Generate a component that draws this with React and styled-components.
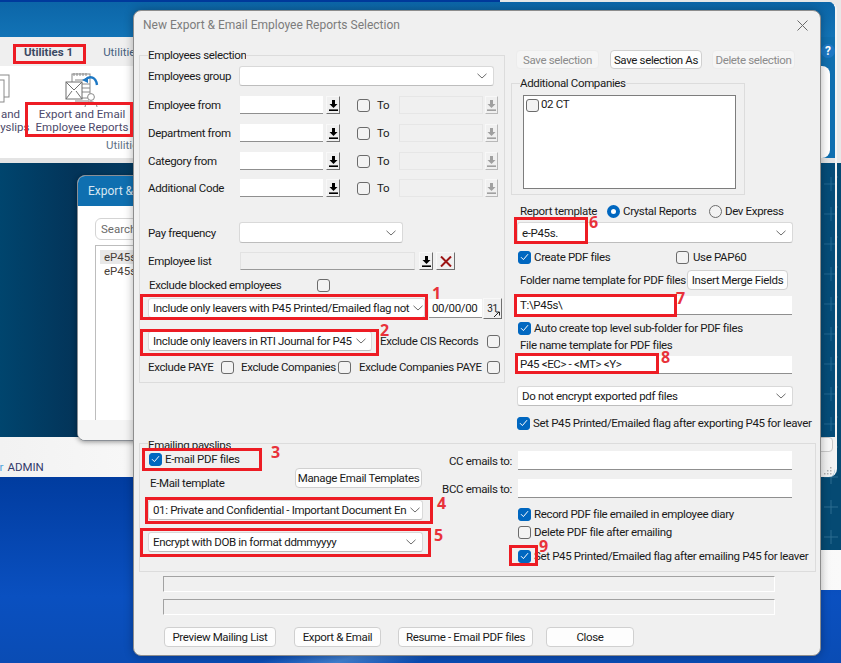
import React from "react";
import styled, { createGlobalStyle } from "styled-components";

const GlobalStyle = createGlobalStyle`
  html, body { margin: 0; padding: 0; background: #0a45ad; }
  * { box-sizing: border-box; }
`;

const Desktop = styled.div`
  position: relative;
  width: 841px;
  height: 663px;
  overflow: hidden;
  font-family: Roboto, "Noto Sans", sans-serif;
  font-size: 11.5px;
  letter-spacing: -0.35px;
  color: #1a1a1a;
  background:
    linear-gradient(160deg, transparent 78%, rgba(120, 180, 235, 0.5) 81%, transparent 84%),
    linear-gradient(180deg, #003a9c 70%, #0a50c0 90%, #0a4cb4 100%);
`;

/* windows sitting behind the dialog */
const BackWindow = styled.div`
  position: absolute;
  left: 500px;
  top: 0;
  right: 0;
  height: 590px;
  display: flex;
  flex-direction: column;
  background: #f4f4f4;
`;
const BackRibbon = styled.div`
  height: 163px;
  background: #e8e8e8;
`;
const BackStatus = styled.div`
  height: 40px;
  background: linear-gradient(90deg, #ededed, #fafafa);
`;
const TealBody = styled.div`
  flex: 1;
  position: relative;
  overflow: hidden;
  background: ${(p) => p.$bg};
`;
const CrossSvg = styled.svg`
  position: absolute;
  inset: 0;
  width: 100%;
  height: 100%;
`;

const AppWindow = styled.div`
  position: absolute;
  left: 0;
  top: 2px;
  width: 837px;
  height: 475px;
  display: flex;
  flex-direction: column;
  background: #0f6fb0;
  border-right: 2px solid #f4f4f4;
  border-radius: 0 8px 8px 0;
  overflow: hidden;
  letter-spacing: 0;
  font-size: 11.5px;
`;
const AppHeader = styled.div`
  height: 35px;
  background: linear-gradient(180deg, #0c66a8, #1273b6);
`;
const TabRow = styled.div`
  height: 29px;
  display: flex;
`;
const TabStrip = styled.div`
  flex: 1;
  display: flex;
  align-items: center;
  padding-left: 24px;
  gap: 30px;
  background: #efefef;
`;
const Tab = styled.span`
  font-weight: ${(p) => (p.$active ? 700 : 400)};
  color: ${(p) => (p.$active ? "#3b4a63" : "#47617f")};
`;
const HelpZone = styled.div`
  width: 17px;
  padding-left: 3px;
  display: flex;
  align-items: center;
`;
const HelpIcon = styled.span`
  flex: none;
  width: 14px;
  height: 14px;
  margin-top: -2px;
  border-radius: 50%;
  background: #1d78c4;
  color: #fff;
  font-size: 12px;
  font-weight: 700;
  line-height: 14px;
  text-align: center;
`;
const RibbonBand = styled.div`
  height: 92px;
  margin-right: 5px;
  display: flex;
  flex-direction: column;
  background: #fff;
  border-radius: 0 8px 8px 0;
`;
const ToolRow = styled.div`
  display: flex;
  height: 70px;
  padding-top: 6px;
`;
const Tool = styled.div`
  flex: none;
  width: ${(p) => p.$w}px;
  margin-left: ${(p) => p.$ml}px;
  display: flex;
  flex-direction: column;
  align-items: center;
  color: #4d4a6a;
  line-height: 13px;
  text-align: center;
  white-space: nowrap;
  svg { flex: none; }
`;
const RibbonCaption = styled.div`
  padding-left: 106px;
  margin-top: 2px;
  color: #5f7288;
`;
const RibbonGap = styled.div`
  height: 5px;
  background: #e4e4e4;
`;
const AppStatus = styled.div`
  position: relative;
  height: 40px;
  display: flex;
  align-items: flex-end;
  gap: 4px;
  padding: 0 0 3px 0;
  background: linear-gradient(90deg, #f2f2f2, #fff 40%, #f2f2f2);
  color: #333a6a;
`;
const StatusKey = styled.span`
  margin-left: -20px;
  color: #4ea3dc;
`;
const StatusPanel = styled.div`
  position: absolute;
  right: 2px;
  top: 0;
  width: 20px;
  height: 15px;
  background: #f7f7f7;
  border: 1px solid #c9c9c9;
  border-radius: 4px;
`;
const ResizeGrip = styled.svg`
  position: absolute;
  right: 3px;
  bottom: 2px;
  width: 9px;
  height: 9px;
`;

const ExportWindow = styled.div`
  position: absolute;
  left: 77px;
  top: 175px;
  width: 700px;
  height: 266px;
  display: flex;
  flex-direction: column;
  background: #fff;
  border: 1px solid #8a8f96;
  border-radius: 8px;
  overflow: hidden;
  box-shadow: 0 1px 5px rgba(0, 0, 0, 0.4);
  letter-spacing: 0;
`;
const ExportTitle = styled.div`
  height: 30px;
  flex: none;
  display: flex;
  align-items: center;
  padding-left: 10px;
  background: #0f6fb0;
  color: #d6e6f2;
  font-size: 12px;
`;
const ExportBody = styled.div`
  flex: 1;
  padding: 12px 0 0 17px;
`;
const SearchBox = styled.div`
  width: 200px;
  height: 22px;
  padding-left: 5px;
  line-height: 20px;
  border: 1px solid #d4d4d4;
  border-radius: 6px;
  color: #6a6a6a;
`;
const ReportList = styled.div`
  width: 300px;
  height: 175px;
  margin-top: 5px;
  padding: 4px 4px;
  border: 1px solid #bdbdbd;
  border-bottom: none;
`;
const ReportItem = styled.div`
  height: 14px;
  line-height: 14px;
  padding-left: 4px;
  background: ${(p) => (p.$sel ? "#e8e8e8" : "transparent")};
  color: #4a4038;
`;
const ExportFooter = styled.div`
  height: 21px;
  flex: none;
  background: #f5f5f5;
`;

/* main dialog */
const Dialog = styled.div`
  position: absolute;
  left: 133px;
  top: 10px;
  width: 688px;
  height: 646px;
  background: #f0f0f0;
  border: 1px solid #8d8d8d;
  border-radius: 8px;
  box-shadow: 0 0 10px rgba(0, 0, 0, 0.3);
`;
const TitleBar = styled.div`
  height: 29px;
  padding: 0 9px 1px;
  display: flex;
  align-items: center;
  justify-content: space-between;
  color: #7c7c7c;
  font-size: 12px;
  letter-spacing: 0;
`;
const CloseIcon = styled.svg`
  width: 11px;
  height: 11px;
  margin-right: 3px;
`;
const DialogBody = styled.div`
  padding: 8px 4px 0 5px;
`;
const TopGrid = styled.div`
  display: grid;
  grid-template-columns: 366px 304px;
  column-gap: 6px;
  align-items: start;
`;
const Column = styled.div`
  display: flex;
  flex-direction: column;
  min-width: 0;
`;
const Group = styled.fieldset`
  margin: ${(p) => p.$mt || 0}px 0 0;
  min-width: 0;
  width: ${(p) => (p.$w ? `${p.$w}px` : "auto")};
  padding: ${(p) => p.$pad};
  border: 1px solid #dcdcdc;
`;
const Legend = styled.legend`
  padding: 0;
  height: ${(p) => p.$h || 14}px;
  line-height: 14px;
  overflow: hidden;
`;
const Row = styled.div`
  display: flex;
  align-items: center;
  flex: none;
  height: ${(p) => p.$h || 16}px;
  margin-top: ${(p) => p.$mt || 0}px;
  margin-left: ${(p) => p.$ml || 0}px;
`;
const Label = styled.span`
  flex: none;
  white-space: nowrap;
  width: ${(p) => (p.$w ? `${p.$w}px` : "auto")};
  margin-left: ${(p) => p.$ml || 0}px;
  text-align: ${(p) => p.$align || "left"};
`;
const SelectBox = styled.div`
  flex: none;
  width: ${(p) => p.$w}px;
  height: ${(p) => p.$h || 20}px;
  padding: 0 6px 0 ${(p) => p.$pl || 4}px;
  display: flex;
  align-items: center;
  justify-content: space-between;
  background: #fff;
  border: 1px solid #d9d9d9;
  border-bottom-color: #bdbdbd;
  border-radius: 3px;
  white-space: nowrap;
  overflow: hidden;
`;
const Chevron = styled.svg`
  flex: none;
  width: 10px;
  height: 6px;
  margin-left: 4px;
`;
const TextBox = styled.div`
  flex: none;
  width: ${(p) => p.$w}px;
  height: ${(p) => p.$h || 18}px;
  margin-left: ${(p) => p.$ml || 0}px;
  padding-left: 3px;
  line-height: ${(p) => (p.$h || 18) - 1}px;
  background: ${(p) => (p.$off ? "#f0f0f0" : "#fff")};
  border: ${(p) => (p.$off ? "1px solid #e6e6e6" : "none")};
  border-bottom: 1px solid ${(p) => (p.$off ? "#e6e6e6" : "#8f8f8f")};
  white-space: nowrap;
`;
const ListBox = styled(TextBox)`
  background: #f0f0f0;
  border: 1px solid #e2e2e2;
  border-bottom: 1px solid #9a9a9a;
`;
const BevelButton = styled.div`
  flex: none;
  position: relative;
  width: ${(p) => p.$w}px;
  height: ${(p) => p.$h || 18}px;
  margin-left: ${(p) => p.$ml || 0}px;
  display: flex;
  align-items: center;
  justify-content: center;
  background: #f0f0f0;
  border: 1px solid;
  border-color: #f8f8f8 ${(p) => (p.$off ? "#b8b8b8" : "#6f6f6f")} ${(p) => (p.$off ? "#b8b8b8" : "#6f6f6f")} #f8f8f8;
  font-size: 10px;
`;
const CalendarCorner = styled.svg`
  position: absolute;
  right: 1px;
  bottom: 1px;
  width: 6px;
  height: 6px;
`;
const CheckBox = styled.span`
  flex: none;
  width: 13px;
  height: 13px;
  margin-left: ${(p) => p.$ml || 0}px;
  margin-right: ${(p) => p.$mr || 0}px;
  display: flex;
  align-items: center;
  justify-content: center;
  background: ${(p) => (p.$on ? "#0067c0" : "#f3f3f3")};
  border: 1px solid ${(p) => (p.$on ? "#0067c0" : "#6b6b6b")};
  border-radius: 3px;
`;
const Radio = styled.span`
  flex: none;
  width: 13px;
  height: 13px;
  margin-left: ${(p) => p.$ml || 0}px;
  margin-right: 3px;
  border-radius: 50%;
  background: ${(p) => (p.$on ? "#fff" : "#f3f3f3")};
  border: ${(p) => (p.$on ? "4px solid #0067c0" : "1px solid #6b6b6b")};
`;
const Button = styled.div`
  flex: none;
  width: ${(p) => p.$w}px;
  height: ${(p) => p.$h || 20}px;
  margin-left: ${(p) => p.$ml || 0}px;
  display: flex;
  align-items: center;
  justify-content: center;
  white-space: nowrap;
  background: ${(p) => (p.$off ? "#f5f5f5" : "#fdfdfd")};
  color: ${(p) => (p.$off ? "#8b8b8b" : "#1a1a1a")};
  border: 1px solid ${(p) => (p.$off ? "#ececec" : "#d0d0d0")};
  border-radius: 4px;
`;
const CompanyList = styled.div`
  width: 213px;
  height: 94px;
  margin-left: 3px;
  padding: 3px 2px;
  display: flex;
  align-items: flex-start;
  gap: 2px;
  line-height: 11px;
  background: #fff;
  border: 1px solid #7d7d7d;
`;
const EmailGrid = styled.div`
  display: grid;
  grid-template-columns: 284px 1fr;
`;
const TemplateLabel = styled.span`
  flex: none;
  width: 147px;
  padding-left: 2px;
  align-self: flex-start;
  margin-top: 7px;
  line-height: 16px;
`;
const Progress = styled.div`
  width: 612px;
  height: 16px;
  margin-left: 24px;
  margin-top: ${(p) => p.$mt}px;
  background: #f0f0f0;
  border: 1px solid;
  border-color: #a2a2a2 #fff #fff #a2a2a2;
`;
const FooterRow = styled.div`
  display: flex;
  margin: 12px 0 0 25px;
`;

/* red markup drawn over the screenshot */
const Frame = styled.div`
  position: absolute;
  left: ${(p) => p.$x}px;
  top: ${(p) => p.$y}px;
  width: ${(p) => p.$w}px;
  height: ${(p) => p.$h}px;
  border: 3px solid #ed1c24;
`;
const Mark = styled.span`
  position: absolute;
  left: ${(p) => p.$x}px;
  top: ${(p) => p.$y}px;
  font-family: "Open Sans", sans-serif;
  font-size: 16px;
  font-weight: 700;
  line-height: 12px;
  letter-spacing: 0;
  color: #e8323a;
`;

const FRAMES = [
  [13, 44, 73, 20],
  [25, 102, 108, 35],
  [140, 294, 288, 26],
  [140, 329, 239, 27],
  [142, 448, 120, 23],
  [145, 497, 288, 27],
  [140, 528, 291, 29],
  [514, 217, 74, 27],
  [514, 294, 163, 23],
  [515, 353, 144, 21],
  [509, 545, 29, 21],
];
const MARKS = [
  ["1", 432, 287],
  ["2", 380, 324],
  ["3", 271, 446],
  ["4", 437, 497],
  ["5", 434, 529],
  ["6", 589, 216],
  ["7", 676, 292],
  ["8", 661, 351],
  ["9", 539, 540],
];

const ChevronDown = () => (
  <Chevron viewBox="0 0 10 6">
    <path d="M.5.8 5 5 9.5.8" fill="none" stroke="#5c5c5c" strokeWidth="0.9" />
  </Chevron>
);

const Select = ({ w, h, pl, children }) => (
  <SelectBox $w={w} $h={h} $pl={pl}>
    <span>{children}</span>
    <ChevronDown />
  </SelectBox>
);

const Check = ({ on, ml, mr }) => (
  <CheckBox $on={on} $ml={ml} $mr={mr}>
    {on && (
      <svg width="9" height="8" viewBox="0 0 9 8">
        <path d="M1 4.2 3.4 6.6 8 1.2" fill="none" stroke="#fff" strokeWidth="1" />
      </svg>
    )}
  </CheckBox>
);

const PickIcon = ({ off }) => (
  <svg width="9" height="11" viewBox="0 0 9 11">
    <path d="M3 0h3v4h2.5L4.5 8 .5 4H3z" fill={off ? "#a0a0a0" : "#000"} />
    <rect y="9.4" width="9" height="1.6" fill={off ? "#a0a0a0" : "#000"} />
  </svg>
);

const FromRow = ({ label, mt }) => (
  <Row $h={18} $mt={mt}>
    <Label $w={92}>{label}</Label>
    <TextBox $w={83} />
    <BevelButton $w={14} $ml={3}>
      <PickIcon />
    </BevelButton>
    <Check ml={17} />
    <Label $w={22} $ml={7}>To</Label>
    <TextBox $w={84} $off />
    <BevelButton $w={13} $ml={2} $off>
      <PickIcon off />
    </BevelButton>
  </Row>
);

// only the strip right of the dialog shows the crosses
const Crosses = ({ id, color, x, y, from }) => (
  <CrossSvg>
    <defs>
      <pattern id={id} x={x} y={y} width="30" height="30" patternUnits="userSpaceOnUse">
        <path d="M15 8v14M8 15h14" stroke={color} strokeWidth="1" />
      </pattern>
    </defs>
    <rect x={from} width="100%" height="100%" fill={`url(#${id})`} />
  </CrossSvg>
);

const ExportIcon = () => (
  <svg width="34" height="36" viewBox="0 0 34 36">
    <rect x="7" y="2" width="18" height="24" fill="#fff" stroke="#8a8a8a" />
    <path d="M9 1v3M12 1v3M15 1v3M18 1v3M21 1v3M10 8h12M16 12h9M16 16h9M16 20h9M10 29h14" stroke="#8a8a8a" />
    <rect x="1" y="10" width="16" height="17" fill="#fff" stroke="#6f6f6f" />
    <path d="M1 10l8 8 8-8M1 27l6-8M17 27l-6-8" fill="none" stroke="#6f6f6f" />
    <path d="M20 8c5-5 11-3 12 5" fill="none" stroke="#1d78c4" strokeWidth="2.4" />
    <path d="M17 8l6-3v6z" fill="#1d78c4" />
    <circle cx="26" cy="25" r="3.4" fill="#fff" stroke="#8a8a8a" />
    <path d="M20 35c0-7 12-7 12 0" fill="#fff" stroke="#8a8a8a" />
  </svg>
);

const PayslipIcon = () => (
  <svg width="34" height="36" viewBox="0 0 34 36">
    <rect x="11" y="3" width="22" height="22" fill="#fff" stroke="#8a8a8a" />
    <rect x="6" y="8" width="22" height="22" fill="#fff" stroke="#8a8a8a" />
    <rect x="0" y="14" width="22" height="18" fill="#fff" stroke="#6f6f6f" />
    <path d="M0 14l11 9 11-9M0 32l8-11M22 32l-8-11" fill="none" stroke="#6f6f6f" />
  </svg>
);

export default function App() {
  return (
    <Desktop>
      <GlobalStyle />

      <BackWindow>
        <BackRibbon />
        <TealBody $bg="#054a73">
          <Crosses id="crossBack" color="#2c6b90" x="316" y="-1" from="320" />
        </TealBody>
        <BackStatus />
      </BackWindow>

      <AppWindow>
        <AppHeader />
        <TabRow>
          <TabStrip>
            <Tab $active>Utilities 1</Tab>
            <Tab>Utilities 2</Tab>
          </TabStrip>
          <HelpZone>
            <HelpIcon>?</HelpIcon>
          </HelpZone>
        </TabRow>
        <RibbonBand>
          <ToolRow>
            <Tool $w={75} $ml={-45}>
              <PayslipIcon />
              Export and
              <br />
              Email Payslips
            </Tool>
            <Tool $w={100} $ml={2}>
              <ExportIcon />
              Export and Email
              <br />
              Employee Reports
            </Tool>
          </ToolRow>
          <RibbonCaption>Utilities 1</RibbonCaption>
        </RibbonBand>
        <RibbonGap />
        <TealBody $bg="linear-gradient(90deg, #00456e 0, #033459 9%, #04456e 30%, #054c78 100%)">
          <Crosses id="crossApp" color="#1f6690" x="816" y="6" from="820" />
        </TealBody>
        <AppStatus>
          <StatusKey>User</StatusKey>
          ADMIN
          <StatusPanel />
          <ResizeGrip viewBox="0 0 9 9">
            <path d="M7 1h1.5v1.5H7zM4 4h1.5v1.5H4zM7 4h1.5v1.5H7zM1 7h1.5v1.5H1zM4 7h1.5v1.5H4zM7 7h1.5v1.5H7z" fill="#b0b0b0" />
          </ResizeGrip>
        </AppStatus>
      </AppWindow>

      <ExportWindow>
        <ExportTitle>Export &amp; Email Employee Reports</ExportTitle>
        <ExportBody>
          <SearchBox>Search</SearchBox>
          <ReportList>
            <ReportItem $sel>eP45s</ReportItem>
            <ReportItem>eP45s</ReportItem>
          </ReportList>
        </ExportBody>
        <ExportFooter />
      </ExportWindow>

      <Dialog>
        <TitleBar>
          <span>New Export &amp; Email Employee Reports Selection</span>
          <CloseIcon viewBox="0 0 11 11">
            <path d="M.5.5l10 10M10.5.5l-10 10" stroke="#6a6a6a" strokeWidth="1" />
          </CloseIcon>
        </TitleBar>
        <DialogBody>
          <TopGrid>
            <Column>
              <Group $pad="4px 4px 7px 8px">
                <Legend>Employees selection</Legend>
                <Row $h={20}>
                  <Label $w={91}>Employees group</Label>
                  <Select w={255} />
                </Row>
                <FromRow label="Employee from" mt={10} />
                <FromRow label="Department from" mt={10} />
                <FromRow label="Category from" mt={10} />
                <FromRow label="Additional Code" mt={9} />
                <Row $h={21} $mt={25}>
                  <Label $w={91}>Pay frequency</Label>
                  <Select w={164} h={21} />
                </Row>
                <Row $h={18} $mt={9}>
                  <Label $w={92}>Employee list</Label>
                  <ListBox $w={175} />
                  <BevelButton $w={14} $ml={4}>
                    <PickIcon />
                  </BevelButton>
                  <BevelButton $w={19} $ml={3}>
                    <svg width="12" height="11" viewBox="0 0 12 11">
                      <path d="M1 .5l10 10M11 .5L1 10.5" stroke="#9c1414" strokeWidth="2" />
                    </svg>
                  </BevelButton>
                </Row>
                <Row $mt={7}>
                  <Label $w={168} $ml={1}>Exclude blocked employees</Label>
                  <Check />
                </Row>
                <Row $h={20} $mt={5}>
                  <Select w={277} h={20}>Include only leavers with P45 Printed/Emailed flag not</Select>
                  <TextBox $w={53} $h={19} $ml={4}>00/00/00</TextBox>
                  <BevelButton $w={19} $h={21} $ml={1}>
                    31
                    <CalendarCorner viewBox="0 0 6 6">
                      <path d="M0 6 5 1M2 1h3.5v3.5" fill="none" stroke="#222" />
                    </CalendarCorner>
                  </BevelButton>
                </Row>
                <Row $h={20} $mt={13}>
                  <Select w={224} h={20}>Include only leavers in RTI Journal for P45</Select>
                  <Label $w={107} $ml={8}>Exclude CIS Records</Label>
                  <Check />
                </Row>
                <Row $mt={8}>
                  <Label $w={73}>Exclude PAYE</Label>
                  <Check mr={7} />
                  <Label $w={97}>Exclude Companies</Label>
                  <Check mr={8} />
                  <Label $w={128}>Exclude Companies PAYE</Label>
                  <Check />
                </Row>
              </Group>
            </Column>

            <Column>
              <Row $h={19} $mt={2} $ml={5}>
                <Button $w={83} $h={19} $off>Save selection</Button>
                <Button $w={92} $h={19} $ml={11}>Save selection As</Button>
                <Button $w={83} $h={19} $ml={10} $off>Delete selection</Button>
              </Row>
              <Group $w={234} $mt={7} $pad="5px 8px 5px 8px">
                <Legend>Additional Companies</Legend>
                <CompanyList>
                  <Check />
                  02 CT
                </CompanyList>
              </Group>
              <Row $mt={8} $ml={9}>
                <Label $w={87}>Report template</Label>
                <Radio $on />
                <Label $w={86}>Crystal Reports</Label>
                <Radio />
                <Label>Dev Express</Label>
              </Row>
              <Row $h={21} $mt={3} $ml={6}>
                <Select w={276} h={21}>e-P45s.</Select>
              </Row>
              <Row $mt={6} $ml={7}>
                <Check mr={3} on />
                <Label $w={142}>Create PDF files</Label>
                <Check mr={4} />
                <Label>Use PAP60</Label>
              </Row>
              <Row $h={20} $mt={5} $ml={9}>
                <Label $w={167}>Folder name template for PDF files</Label>
                <Button $w={101}>Insert Merge Fields</Button>
              </Row>
              <Row $h={19} $mt={6} $ml={6}>
                <TextBox $w={275} $h={19}>T:\P45s\</TextBox>
              </Row>
              <Row $mt={5} $ml={7}>
                <Check mr={3} on />
                <Label>Auto create top level sub-folder for PDF files</Label>
              </Row>
              <Row $mt={1} $ml={9}>
                <Label>File name template for PDF files</Label>
              </Row>
              <Row $h={18} $mt={3} $ml={6}>
                <TextBox $w={275}>P45 &lt;EC&gt; - &lt;MT&gt; &lt;Y&gt;</TextBox>
              </Row>
              <Row $h={20} $mt={12} $ml={6}>
                <Select w={276}>Do not encrypt exported pdf files</Select>
              </Row>
              <Row $mt={9} $ml={6}>
                <Check mr={3} on />
                <Label>Set P45 Printed/Emailed flag after exporting P45 for leaver</Label>
              </Row>
            </Column>
          </TopGrid>

          <Group $mt={7} $pad="0 0 7px 8px">
            <Legend $h={10}>Emailing payslips</Legend>
            <EmailGrid>
              <Column>
                <Row $mt={3} $ml={1}>
                  <Check on mr={3} />
                  <Label>E-mail PDF files</Label>
                </Row>
                <Row $h={20} $mt={1}>
                  <TemplateLabel>E-Mail template</TemplateLabel>
                  <Button $w={127}>Manage Email Templates</Button>
                </Row>
                <Row $h={20} $mt={12}>
                  <Select w={275}>01: Private and Confidential - Important Document En</Select>
                </Row>
                <Row $h={20} $mt={12}>
                  <Select w={275}>Encrypt with DOB in format ddmmyyyy</Select>
                </Row>
              </Column>
              <Column>
                <Row $h={19} $mt={3}>
                  <Label $w={80} $align="right">CC emails to:</Label>
                  <TextBox $w={274} $h={19} $ml={6} />
                </Row>
                <Row $h={19} $mt={9}>
                  <Label $w={80} $align="right">BCC emails to:</Label>
                  <TextBox $w={274} $h={19} $ml={6} />
                </Row>
                <Row $mt={8} $ml={86}>
                  <Check on mr={3} />
                  <Label>Record PDF file emailed in employee diary</Label>
                </Row>
                <Row $mt={2} $ml={86}>
                  <Check mr={3} />
                  <Label>Delete PDF file after emailing</Label>
                </Row>
                <Row $mt={8} $ml={86}>
                  <Check on mr={3} />
                  <Label>Set P45 Printed/Emailed flag after emailing P45 for leaver</Label>
                </Row>
              </Column>
            </EmailGrid>
          </Group>

          <Progress $mt={4} />
          <Progress $mt={7} />
          <FooterRow>
            <Button $w={112}>Preview Mailing List</Button>
            <Button $w={87} $ml={18}>Export &amp; Email</Button>
            <Button $w={135} $ml={17}>Resume - Email PDF files</Button>
            <Button $w={88} $ml={13}>Close</Button>
          </FooterRow>
        </DialogBody>
      </Dialog>

      {FRAMES.map(([x, y, w, h]) => (
        <Frame key={`${x}-${y}`} $x={x} $y={y} $w={w} $h={h} />
      ))}
      {MARKS.map(([n, x, y]) => (
        <Mark key={n} $x={x} $y={y}>{n}</Mark>
      ))}
    </Desktop>
  );
}
